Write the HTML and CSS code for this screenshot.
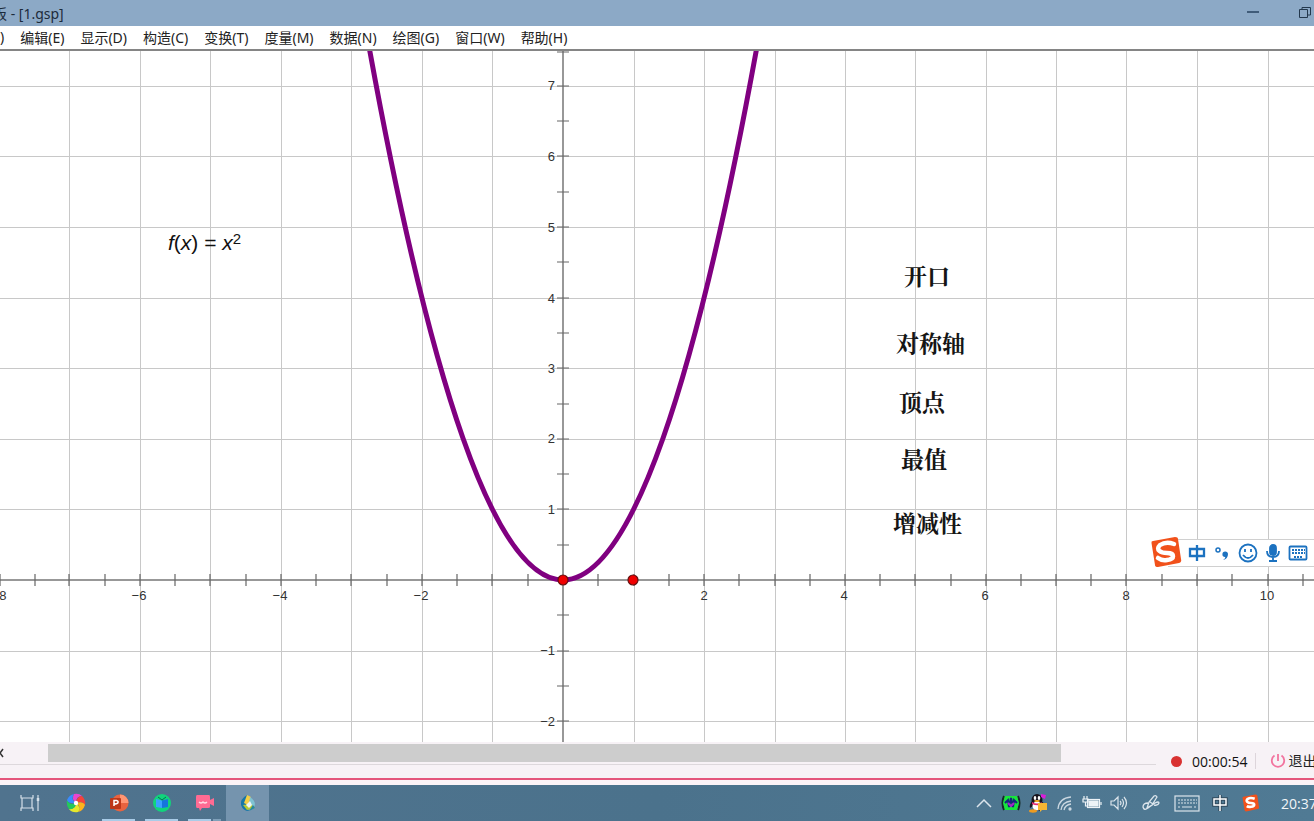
FILE: index.html
```html
<!DOCTYPE html>
<html lang="zh-CN">
<head>
<meta charset="utf-8">
<title>[1.gsp]</title>
<link rel="stylesheet" href="styles.css">
</head>
<body>
<header class="titlebar">
  <h1 class="title">板 - [1.gsp]</h1>
  <div class="window-buttons">
    <button class="window-button" aria-label="最小化"><svg width="12" height="12"><path d="M0 5H12" stroke="#27435f" stroke-width="1.5"/></svg></button>
    <button class="window-button" aria-label="还原"><svg width="12" height="12" fill="none" stroke="#23384d"><path d="M.5 2.500H8.500V10.500H.5ZM3 2V.5H11.500V8H9"/></svg></button>
  </div>
</header>
<nav class="menubar">
  <button class="menu">)</button>
  <button class="menu">编辑(E)</button>
  <button class="menu">显示(D)</button>
  <button class="menu">构造(C)</button>
  <button class="menu">变换(T)</button>
  <button class="menu">度量(M)</button>
  <button class="menu">数据(N)</button>
  <button class="menu">绘图(G)</button>
  <button class="menu">窗口(W)</button>
  <button class="menu">帮助(H)</button>
</nav>
<main class="sketch">
  <svg class="plot" role="img" aria-label="f(x) = x²">
    <g transform="translate(563 529)">
      <path class="grid" d="M-494-529V400M-423-529V400M-353-529V400M-282-529V400M-212-529V400M-141-529V400M-71-529V400M71-529V400M141-529V400M212-529V400M282-529V400M352-529V400M423-529V400M493-529V400M563-529V400M634-529V400M705-529V400"/>
      <path class="grid" d="M-563-494H2000M-563-424H2000M-563-353H2000M-563-282H2000M-563-212H2000M-563-141H2000M-563-71H2000M-563 71H2000M-563 141H2000"/>
      <path class="axis" d="M0-529V400M-563 0H2000"/>
      <path class="tick" d="M-563-6V6M-528-6V6M-494-6V6M-458-6V6M-423-6V6M-388-6V6M-353-6V6M-317-6V6M-282-6V6M-247-6V6M-212-6V6M-176-6V6M-141-6V6M-106-6V6M-71-6V6M-35-6V6M35-6V6M71-6V6M106-6V6M141-6V6M176-6V6M212-6V6M247-6V6M282-6V6M317-6V6M352-6V6M388-6V6M423-6V6M458-6V6M493-6V6M528-6V6M563-6V6M599-6V6M634-6V6M669-6V6M705-6V6M740-6V6"/>
      <path class="tick" d="M-6-528H6M-6-494H6M-6-459H6M-6-424H6M-6-388H6M-6-353H6M-6-318H6M-6-282H6M-6-247H6M-6-212H6M-6-176H6M-6-141H6M-6-106H6M-6-71H6M-6-35H6M-6 35H6M-6 71H6M-6 106H6M-6 141H6"/>
      <path class="curve" d="M-200-567Q0 567 200-567"/>
      <circle class="point" r="5"/>
      <circle class="point" cx="70" r="5"/>
      <g class="x-labels">
        <text x="-564" y="20">−8</text><text x="-424" y="20">−6</text><text x="-283" y="20">−4</text><text x="-142" y="20">−2</text>
        <text x="141" y="20">2</text><text x="281" y="20">4</text><text x="422" y="20">6</text><text x="563" y="20">8</text><text x="704" y="20">10</text>
      </g>
      <g class="y-labels">
        <text x="-8" y="-490">7</text><text x="-8" y="-419">6</text><text x="-8" y="-348">5</text><text x="-8" y="-277">4</text><text x="-8" y="-207">3</text><text x="-8" y="-137">2</text><text x="-8" y="-66">1</text><text x="-8" y="75">−1</text><text x="-8" y="146">−2</text>
      </g>
    </g>
    <text class="formula" x="168" y="199"><tspan class="var">f</tspan>(<tspan class="var">x</tspan>) = <tspan class="var">x</tspan><tspan class="power" dy="-6">2</tspan></text>
    <g class="notes">
      <text x="904" y="234">开口</text>
      <text x="896" y="301">对称轴</text>
      <text x="899" y="360">顶点</text>
      <text x="901" y="417">最值</text>
      <text x="893" y="481">增减性</text>
    </g>
  </svg>
  <div class="ime">
    <svg class="ime-logo" width="34" height="34" viewBox="0 0 34 34"><path d="M3 5Q1 5 1.500 7L5 29Q5 31 8 31L29 27Q32 26 31 23L28 3Q28 1 25 1Z" fill="#f1511b"/><path d="M24 8Q16 5 10 9C5 14 11 17 17 17C25 17 25 23 17 24Q12 25 8 22" fill="none" stroke="#fff" stroke-width="4.500" stroke-linecap="round"/></svg>
    <div class="ime-tools">
      <button class="ime-button" aria-label="中文"><svg width="18" height="18" fill="none" stroke="#1c72c0" stroke-width="2.300"><path d="M2 5H16V12H2ZM9 1V17"/></svg></button>
      <button class="ime-button" aria-label="标点"><svg width="18" height="18"><circle cx="5" cy="6" r="2" fill="none" stroke="#1c72c0" stroke-width="1.500"/><path d="M10 16Q13 14 12 13A2.800 2.800 0 1 1 15 10Q15 15 10 16Z" fill="#1c72c0"/></svg></button>
      <button class="ime-button" aria-label="表情"><svg width="20" height="20" fill="none" stroke="#1c72c0" stroke-width="1.800"><circle cx="10" cy="10" r="8.500"/><path d="M7 6V9M13 6V9M5 12Q10 18 15 12"/></svg></button>
      <button class="ime-button" aria-label="语音"><svg width="16" height="20" fill="none" stroke="#1c72c0" stroke-width="1.800"><rect x="5" y="2" width="6" height="10" rx="3" fill="#1c72c0"/><path d="M2 8Q2 14 8 14Q14 14 14 8M8 14V18M4 18H12"/></svg></button>
      <button class="ime-button" aria-label="键盘"><svg width="20" height="16" fill="none" stroke="#1c72c0" stroke-width="1.800"><rect x="1.500" y="1.500" width="17" height="13" rx="1"/><path d="M4 5H17M4 8H17M6 12H14" stroke-dasharray="2 1"/></svg></button>
    </div>
  </div>
</main>
<section class="lower">
  <div class="scrollbar">
    <button class="scroll-left" aria-label="向左滚动"><svg width="4" height="10" fill="none" stroke="#333" stroke-width="1.500"><path d="M3 1L0 5L3 9"/></svg></button>
    <div class="scroll-track"><div class="scroll-thumb"></div></div>
  </div>
  <div class="recorder">
    <span class="rec-dot"></span>
    <time class="rec-time">00:00:54</time>
    <button class="rec-exit"><svg width="16" height="16" fill="none" stroke="#f2749f" stroke-width="1.800"><path d="M4.500 2.500A6.200 6.200 0 1 0 11.500 2.500M8 1V8"/></svg>退出</button>
  </div>
</section>
<footer class="taskbar">
  <div class="apps">
    <button class="app app-view" aria-label="任务视图"><svg width="20" height="18" fill="none" stroke="#d5e0e9" stroke-width="1.200"><path d="M1 1V4H13V1M1 17V14H13V17M2 4V14H12V4M18 1V17"/><path d="M18 4V7" stroke-width="2.500"/></svg></button>
    <button class="app" aria-label="浏览器"><svg width="20" height="20" viewBox="-10 -10 20 20"><path d="M0 0Q-5-4-2-9Q3-10 6-7Q0-7 0 0" fill="#ea45cf"/><path d="M0 0Q1-7 6-7Q10-3 9 2Q6-3 0 0" fill="#f5433a"/><path d="M0 0Q7-2 9 2Q7 8 2 9Q6 4 0 0" fill="#ffb21c"/><path d="M0 0Q6 5 2 9Q-4 10-7 6Q0 6 0 0" fill="#e6e82b"/><path d="M0 0Q-1 7-7 6Q-10 2-9-3Q-6 3 0 0" fill="#24c95b"/><path d="M0 0Q-7 1-9-3Q-7-8-2-9Q-6-4 0 0" fill="#388cff"/><circle r="2.200" fill="#fff"/></svg></button>
    <button class="app app-open" aria-label="PowerPoint"><svg width="20" height="20"><circle cx="11" cy="10" r="8.500" fill="#e8633f"/><path d="M11 1.500A8.500 8.500 0 0 1 19.500 10H11Z" fill="#ff9572"/><rect x="1" y="5" width="11" height="11" rx="1" fill="#bd3719"/><path d="M5 13V7.500H7.500Q9.500 8 9 9.500Q8.500 11 5 11" fill="none" stroke="#fff" stroke-width="1.500"/></svg></button>
    <button class="app app-open" aria-label="阅读"><svg width="20" height="20"><circle cx="10" cy="10" r="9" fill="#11d47c"/><path d="M4 6L10 7.500V15L4 14Z" fill="#3aa1ff"/><path d="M16 6L10 7.500V15L16 14Z" fill="#1675dc"/><path d="M6 4L10 7L14 4" fill="none" stroke="#066f55"/></svg></button>
    <button class="app app-open app-multi" aria-label="录屏"><svg width="20" height="18"><path d="M2 1H14Q15 1 15 3V6L19 4V12L15 10V13Q15 14 13 14H7L5 17L4 14H2Q1 14 1 12V3Q1 1 2 1Z" fill="#ff6b93"/><path d="M4 8Q6 10 8 8Q10 10 12 8" fill="none" stroke="#ffdce5" stroke-width="1.300"/></svg></button>
    <button class="app app-active" aria-label="几何画板"><svg width="20" height="20"><path d="M9 2Q2 6 3 12Q5 18 11 18L8 13Z" fill="#1677a8"/><path d="M9 2L13 4L10 12L6 10Z" fill="#f4cf45"/><path d="M12 4Q19 9 16 14L11 12Z" fill="#7fc3d2"/><path d="M5 12L9 17L17 15L13 11Z" fill="#b8ca31"/><path d="M8 12L12 8L14 12L11 15Z" fill="#edf7f4"/><path d="M11 18L17 15L15 12" fill="#2688a0"/></svg></button>
  </div>
  <div class="tray">
    <button class="tray-item" aria-label="显示隐藏图标"><svg width="16" height="10" fill="none" stroke="#dce5ec" stroke-width="1.500"><path d="M1 9L8 2L15 9"/></svg></button>
    <button class="tray-item" aria-label="音频"><svg width="20" height="16"><path d="M3 1Q0 8 3 15M17 1Q20 8 17 15" fill="none" stroke="#162b25" stroke-width="2"/><path d="M4 1H16L18 8L16 15H4L2 8Z" fill="#17e53b"/><path d="M4 8L7 5L8 12L10 3L12 12L13 5L16 8" fill="none" stroke="#16267c" stroke-width="2"/><path d="M7 8L10 11L13 8" fill="none" stroke="#a526c7" stroke-width="2"/></svg></button>
    <button class="tray-item" aria-label="QQ"><svg width="20" height="20"><ellipse cx="9" cy="7" rx="5.500" ry="6" fill="#16131c"/><path d="M4 8Q1 12 2 15L5 13Q5 18 9 18Q14 18 14 13L17 14Q17 10 13 8Z" fill="#16131c"/><ellipse cx="9" cy="13" rx="4.500" ry="4.500" fill="#fff"/><ellipse cx="7" cy="5" rx="1.300" ry="2" fill="#fff"/><ellipse cx="11" cy="5" rx="1.300" ry="2" fill="#fff"/><ellipse cx="9" cy="8" rx="3" ry="1" fill="#f6ae23"/><path d="M13 1L18 2L17 6L13 4Z" fill="#da1edb"/><path d="M4 9Q9 12 14 9L13 12Q8 13 4 11Z" fill="#e32a73"/><ellipse cx="5" cy="18" rx="4" ry="1.700" fill="#ed9b20"/><path d="M10 10H19V17H14L12 19V17H10Z" fill="#f7b633"/></svg></button>
    <button class="tray-item" aria-label="无线网络"><svg width="18" height="18" fill="none" stroke="#cbd8e1" stroke-width="1.300"><path d="M2 15Q3 4 15 3M5 16Q6 8 15 7M8 16Q9 11 15 10"/><circle cx="14" cy="15" r="1" fill="#e3edf3"/></svg></button>
    <button class="tray-item" aria-label="电池"><svg width="20" height="16" fill="none" stroke="#edf3f7" stroke-width="1.200"><rect x="5.500" y="4.500" width="12" height="8"/><rect x="7" y="6" width="9" height="5" fill="#edf3f7"/><path d="M19 7V10M2 1V4M5 1V4M1 4H6V7H1ZM3.500 7V11H6"/></svg></button>
    <button class="tray-item" aria-label="音量"><svg width="20" height="16" fill="none" stroke="#dce5ec" stroke-width="1.200"><path d="M2 6H5L9 2V14L5 10H2ZM11 6Q13 8 11 10M13 4Q16 8 13 12M15 2Q20 8 15 14"/></svg></button>
    <button class="tray-item tray-wide tray-pen" aria-label="手写笔"><svg width="18" height="18" fill="none" stroke="#dce5ec" stroke-width="1.300"><path d="M5 14L7 8L12 2Q14 1 15 3L10 11ZM8 8L11 10M6 9Q1 9 1 13Q2 17 6 14L13 9Q17 7 17 9Q16 12 12 11"/></svg></button>
    <button class="tray-item tray-keyboard" aria-label="触摸键盘"><svg width="26" height="17" fill="none" stroke="#dce5ec" stroke-width="1.200"><rect x="1" y="1" width="24" height="15"/><path d="M4 5H23M4 8H23" stroke-dasharray="2 1"/><path d="M4 12H6M8 12H18M20 12H22"/></svg></button>
    <button class="tray-item tray-ime" aria-label="中文输入"><svg width="16" height="18" fill="none"><path d="M2 5H14V11H2ZM8 1V17" stroke="#30495c" stroke-width="3.500"/><path d="M2 5H14V11H2ZM8 1V17" stroke="#fff" stroke-width="1.500"/></svg></button>
    <button class="tray-item tray-wide" aria-label="搜狗输入法"><svg width="18" height="18" viewBox="0 0 34 34"><path d="M3 5Q1 5 1 7L5 31Q6 33 8 33L31 28Q33 27 32 24L29 3Q28 1 25 1Z" fill="#f1511b"/><path d="M24 9Q16 6 11 9C6 14 11 17 17 17C25 17 25 23 17 24Q12 25 9 23" fill="none" stroke="#fff" stroke-width="5"/></svg></button>
    <time class="clock">20:37</time>
  </div>
</footer>
</body>
</html>
```
FILE: styles.css
```css
* { box-sizing: border-box; }
body {
  margin: 0;
  height: 100vh;
  display: flex;
  flex-direction: column;
  overflow: hidden;
  background: #fff;
  font-family: "Noto Sans", "Noto Sans CJK SC", sans-serif;
  font-size: 14px;
  color: #222;
}
button {
  border: 0;
  padding: 0;
  background: none;
  font: inherit;
  color: inherit;
}
svg { display: block; flex: none; }

.titlebar {
  flex: none;
  height: 26px;
  display: flex;
  justify-content: space-between;
  align-items: center;
  padding-bottom: 1px;
  background: #8ca9c6;
}
.title {
  margin: 0 0 0 -7px;
  font-size: 14px;
  font-weight: 400;
  color: #1c2b3b;
}
.window-buttons { display: flex; gap: 40px; padding-right: 3px; }

.menubar {
  flex: none;
  height: 25px;
  display: flex;
  align-items: center;
  gap: 16px;
  padding-bottom: 2px;
  border-bottom: 2px solid #858585;
}
.menu { white-space: nowrap; }

.sketch { flex: 1; min-height: 0; position: relative; overflow: hidden; }
.plot { width: 100%; height: 100%; }
.grid { stroke: #c8c8c8; stroke-width: 1; shape-rendering: crispEdges; }
.axis { stroke: #777; stroke-width: 1.5; }
.tick { stroke: #666; stroke-width: 1.2; }
.curve { fill: none; stroke: #800080; stroke-width: 5; }
.point { fill: #f00000; stroke: #651010; stroke-width: 1.2; }
.x-labels, .y-labels { font: 13px "Liberation Sans", Arial, sans-serif; fill: #333; }
.x-labels { text-anchor: middle; }
.y-labels { text-anchor: end; }
.formula { font: 21px "Liberation Sans", Arial, sans-serif; fill: #111; }
.var { font-style: italic; }
.power { font-size: 15px; }
.notes { font: 700 23px "Noto Serif CJK SC", "Noto Sans CJK SC", serif; fill: #151515; }

.ime {
  position: absolute;
  right: 0;
  bottom: 172px;
  display: flex;
  align-items: center;
}
.ime-logo { margin-right: -16px; z-index: 1; }
.ime-tools {
  height: 28px;
  display: flex;
  align-items: center;
  gap: 7px;
  padding: 0 6px 0 20px;
  background: #fff;
  border: solid #d0d0d0;
  border-width: 1px 0;
}

.lower {
  flex: none;
  height: 43px;
  position: relative;
  background: #f7f2f6;
  border-bottom: 5px solid #fbf3f7;
}
.lower::after {
  content: "";
  display: block;
  margin-top: 13px;
  height: 2px;
  background: #e4557b;
}
.scrollbar {
  height: 23px;
  display: flex;
  align-items: center;
  padding-bottom: 1px;
  border-bottom: 1px solid #ddd8dc;
}
.scroll-left { width: 48px; }
.scroll-track { flex: 1; }
.scroll-thumb { width: 80%; height: 18px; background: #cdcdcd; }
.recorder {
  position: absolute;
  right: 0;
  top: 3px;
  width: 158px;
  height: 32px;
  display: flex;
  align-items: center;
  padding-left: 15px;
  overflow: hidden;
  white-space: nowrap;
  background: #f7f2f6;
}
.rec-dot { flex: none; width: 11px; height: 11px; border-radius: 50%; background: #d93232; }
.rec-time { margin-left: 10px; padding-right: 8px; font-size: 14px; font-family: "Open Sans", sans-serif; color: #111; }
.rec-exit { display: flex; align-items: center; gap: 2px; padding-left: 14px; border-left: 1px solid #ddd5db; line-height: 14px; }

.taskbar {
  flex: none;
  height: 36px;
  display: flex;
  justify-content: space-between;
  background: linear-gradient(90deg, #50738e, #4b728c 50%, #507a94);
}
.apps { display: flex; padding-left: 6px; }
.app {
  width: 43px;
  display: flex;
  align-items: center;
  justify-content: center;
  position: relative;
}
.app-view { width: 48px; }
.app-active { background: #7594ae; }
.app-open::after {
  content: "";
  position: absolute;
  left: 5px;
  right: 5px;
  bottom: 0;
  height: 2px;
  background: #a9cce8;
}
.app-multi::after { background: linear-gradient(90deg, #a9cce8 70%, #50738e 70% 76%, #7fa0b9 76%); }
.tray { display: flex; align-items: center; }
.tray-item { width: 27px; display: flex; justify-content: center; }
.tray-wide { width: 34px; }
.tray-keyboard { width: 38px; }
.tray-ime { width: 28px; }
.tray-pen { margin-left: 2px; }
.clock {
  width: 46px;
  padding-left: 13px;
  overflow: hidden;
  white-space: nowrap;
  color: #f2f6f9;
  font-size: 14px;
  font-family: "Open Sans", sans-serif;
}
```
